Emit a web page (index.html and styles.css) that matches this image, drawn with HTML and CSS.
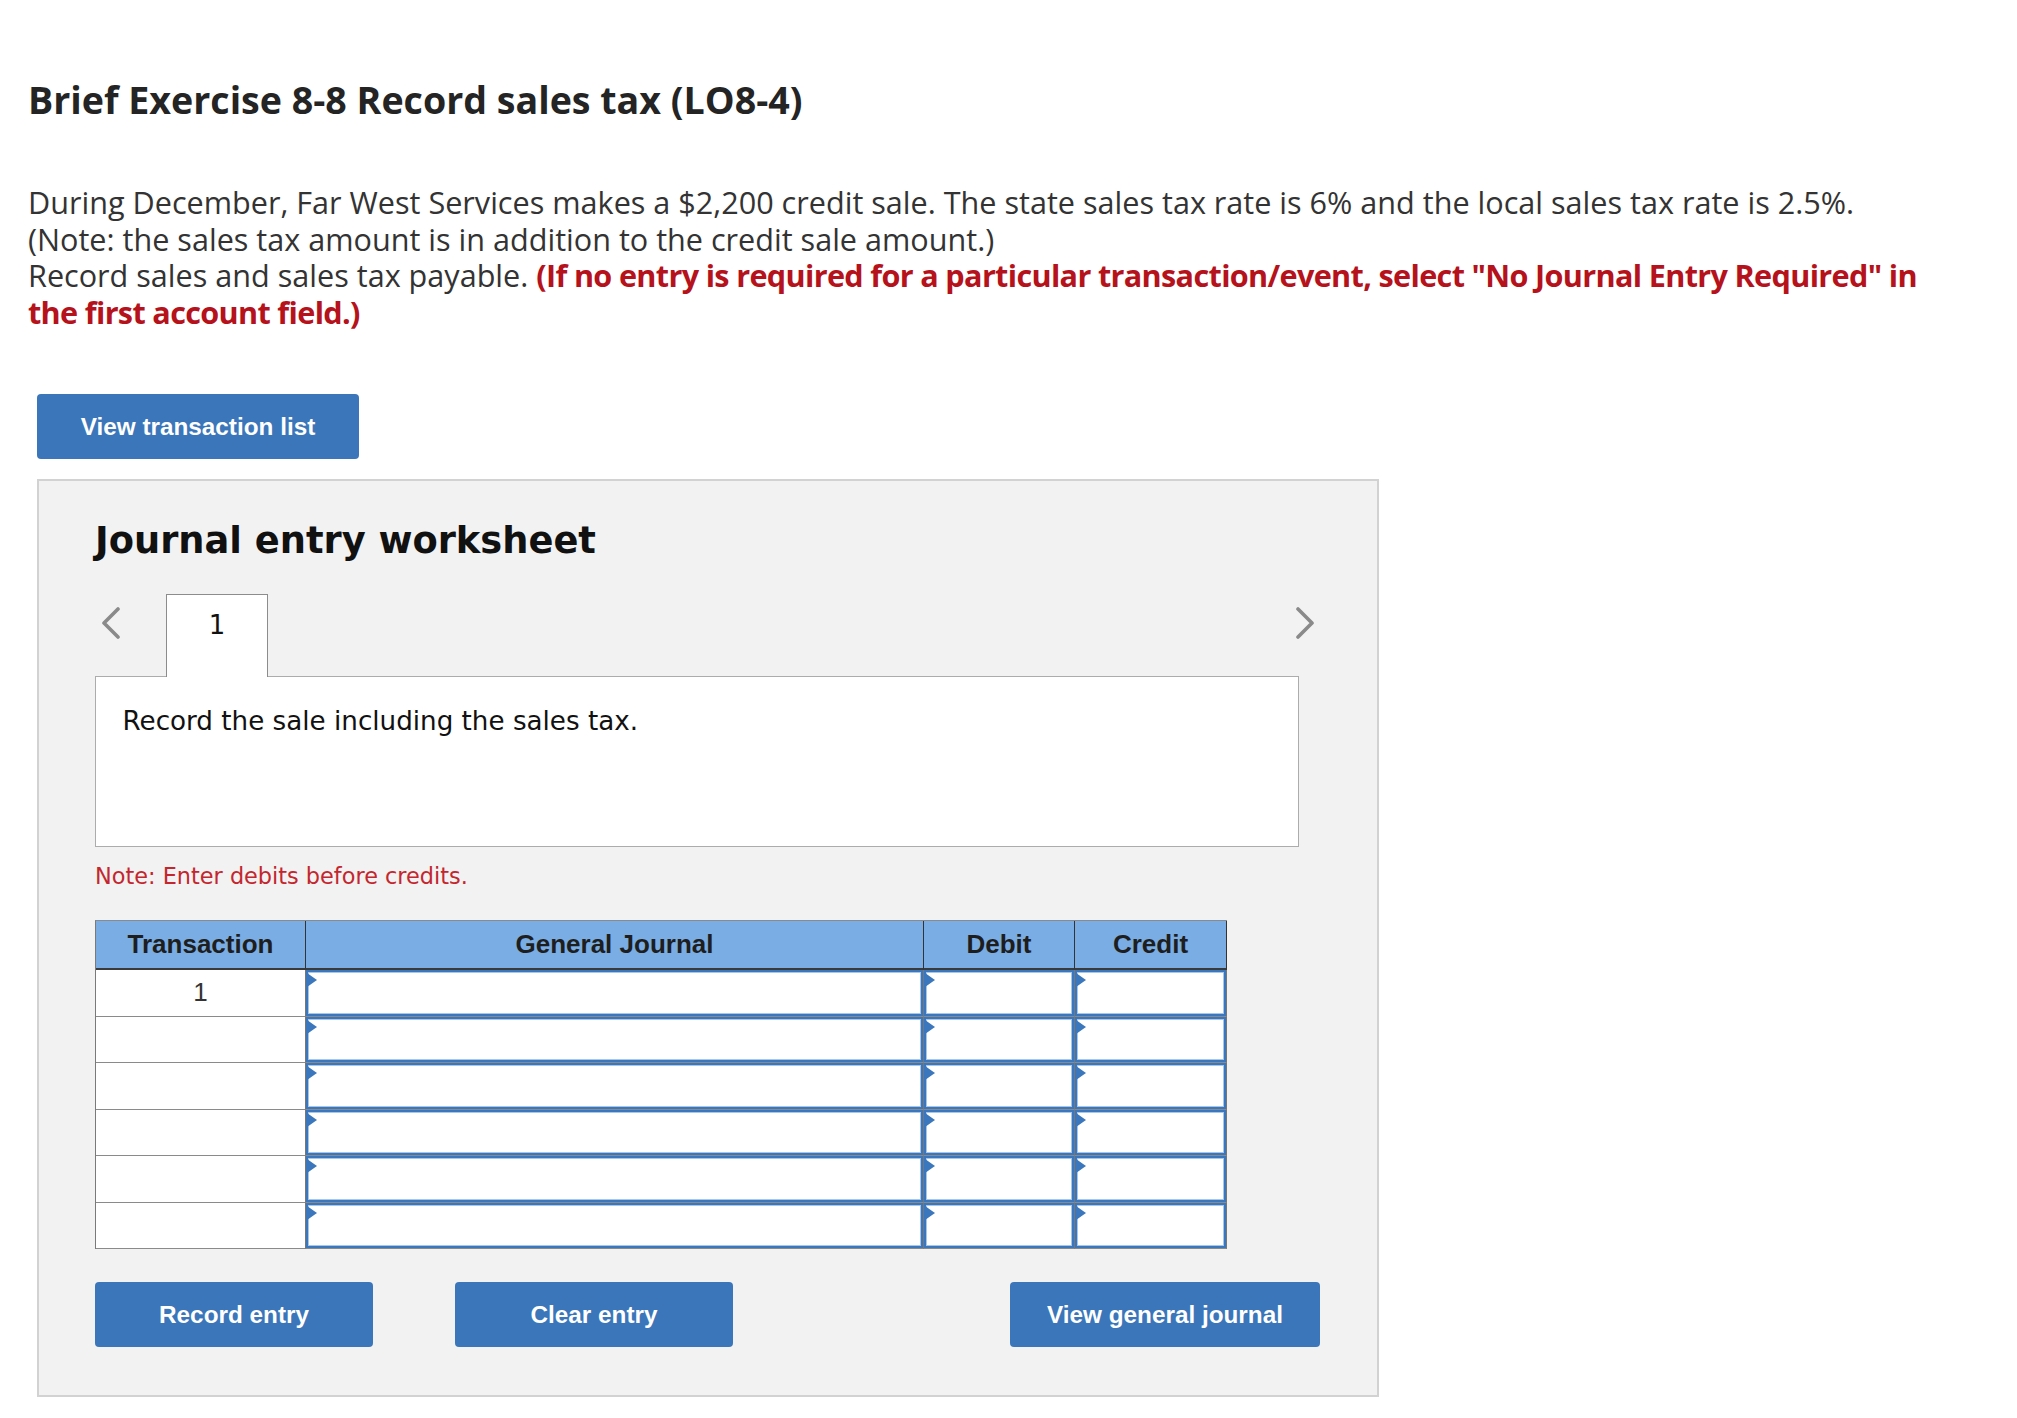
FILE: index.html
```html
<!DOCTYPE html>
<html lang="en">
<head>
<meta charset="utf-8">
<title>Brief Exercise 8-8 Record sales tax (LO8-4)</title>
<link rel="stylesheet" href="styles.css">
</head>
<body>
<h1 class="title">Brief Exercise 8-8 Record sales tax (LO8-4)</h1>
<p class="prompt">During December, Far West Services makes a $2,200 credit sale. The state sales tax rate is 6% and the local sales tax rate is 2.5%.<br>(Note: the sales tax amount is in addition to the credit sale amount.)<br>Record sales and sales tax payable. <strong class="req">(If no entry is required for a particular transaction/event, select "No Journal Entry Required" in<br>the first account field.)</strong></p>

<button class="btn btn-list" type="button">View transaction list</button>

<section class="panel">
  <h2 class="panel-title">Journal entry worksheet</h2>
  <div class="tabs">
    <span class="chev chev-left"><svg width="20" height="32" viewBox="0 0 20 32"><path d="M17 2 L3 16 L17 30" fill="none" stroke="#8a8a8a" stroke-width="3.6" stroke-linecap="round" stroke-linejoin="round"/></svg></span>
    <div class="tab">1</div>
    <span class="chev chev-right"><svg width="20" height="32" viewBox="0 0 20 32"><path d="M3 2 L17 16 L3 30" fill="none" stroke="#8a8a8a" stroke-width="3.6" stroke-linecap="round" stroke-linejoin="round"/></svg></span>
  </div>
  <div class="desc">Record the sale including the sales tax.</div>
  <p class="note">Note: Enter debits before credits.</p>

  <table class="journal">
    <colgroup>
      <col class="c-tr"><col class="c-gj"><col class="c-dr"><col class="c-cr">
    </colgroup>
    <thead>
      <tr><th><div class="hcell">Transaction</div></th><th><div class="hcell">General Journal</div></th><th><div class="hcell">Debit</div></th><th><div class="hcell">Credit</div></th></tr>
    </thead>
    <tbody>
      <tr><td><div class="tcell">1</div></td><td><div class="inp"></div></td><td><div class="inp"></div></td><td><div class="inp"></div></td></tr>
      <tr><td><div class="tcell"></div></td><td><div class="inp"></div></td><td><div class="inp"></div></td><td><div class="inp"></div></td></tr>
      <tr><td><div class="tcell"></div></td><td><div class="inp"></div></td><td><div class="inp"></div></td><td><div class="inp"></div></td></tr>
      <tr><td><div class="tcell"></div></td><td><div class="inp"></div></td><td><div class="inp"></div></td><td><div class="inp"></div></td></tr>
      <tr><td><div class="tcell"></div></td><td><div class="inp"></div></td><td><div class="inp"></div></td><td><div class="inp"></div></td></tr>
      <tr><td><div class="tcell"></div></td><td><div class="inp"></div></td><td><div class="inp"></div></td><td><div class="inp"></div></td></tr>
    </tbody>
  </table>

  <div class="actions">
    <button class="btn btn-record" type="button">Record entry</button>
    <button class="btn btn-clear" type="button">Clear entry</button>
    <button class="btn btn-view" type="button">View general journal</button>
  </div>
</section>
</body>
</html>
```
FILE: styles.css
```css
html, body { background: #ffffff; }
body {
  margin: 0;
  padding: 78px 0 0 28px;
  font-family: "Open Sans", "Liberation Sans", sans-serif;
  color: #333333;
}

.title {
  margin: 0;
  font-family: "Open Sans", sans-serif;
  font-weight: 700;
  font-size: 37.6px;
  line-height: 44px;
  color: #242424;
}

.prompt {
  margin: 62px 0 0 0;
  font-size: 30.6px;
  line-height: 36.5px;
  color: #333333;
  white-space: nowrap;
}
.req {
  color: #b5121b;
  font-weight: 700;
  letter-spacing: -0.66px;
}

.btn {
  display: flex;
  align-items: center;
  justify-content: center;
  height: 65px;
  padding: 0;
  border: none;
  border-radius: 4px;
  background: #3a76b9;
  color: #ffffff;
  font-family: "Liberation Sans", Arial, sans-serif;
  font-weight: 700;
  font-size: 24.3px;
  cursor: pointer;
}
.btn-list {
  width: 322px;
  margin: 64px 0 0 9px;
}

.panel {
  box-sizing: border-box;
  width: 1342px;
  margin: 20px 0 0 9px;
  padding: 38px 57px 48px 56px;
  background: #f2f2f2;
  border: 2px solid #d2d2d2;
}
.panel-title {
  margin: 0;
  font-family: "DejaVu Sans", Verdana, sans-serif;
  font-weight: 700;
  font-size: 36.8px;
  line-height: 44px;
  color: #111111;
}

.tabs {
  display: flex;
  align-items: flex-start;
  margin-top: 31px;
  width: 1220px;
}
.chev {
  display: block;
  margin-top: 13px;
  line-height: 0;
}
.chev-left { margin-left: 6px; }
.chev-right { margin-left: auto; }
.tab {
  position: relative;
  z-index: 1;
  box-sizing: border-box;
  width: 102px;
  height: 83px;
  margin: 0 0 -1px 45px;
  padding-top: 14px;
  background: #ffffff;
  border: 1px solid #8c8c8c;
  border-bottom: none;
  text-align: center;
  font-family: "DejaVu Sans", Verdana, sans-serif;
  font-size: 26px;
  line-height: 32px;
  color: #111111;
}

.desc {
  box-sizing: border-box;
  width: 1204px;
  height: 171px;
  padding: 28px 24px 29px 26.5px;
  background: #ffffff;
  border: 1px solid #acacac;
  font-family: "DejaVu Sans", Verdana, sans-serif;
  font-size: 26.2px;
  line-height: 32px;
  color: #111111;
}

.note {
  margin: 15px 0 0 0;
  font-family: "DejaVu Sans", Verdana, sans-serif;
  font-size: 22.4px;
  line-height: 28px;
  color: #c4262e;
}

.journal {
  margin-top: 30px;
  table-layout: fixed;
  width: 1132px;
  border-collapse: separate;
  border-spacing: 0;
  border-left: 1px solid #7a7a7a;
  border-top: 1px solid #8a8a8a;
}
.c-tr { width: 210px; }
.c-gj { width: 618px; }
.c-dr { width: 151px; }
.c-cr { width: 152px; }

.journal th {
  padding: 0;
  background: #79ade3;
  border-right: 1px solid #333333;
  border-bottom: 2px solid #3a3a3a;
}
.hcell {
  height: 47px;
  display: flex;
  align-items: center;
  justify-content: center;
  font-family: "Liberation Sans", Arial, sans-serif;
  font-weight: 700;
  font-size: 26px;
  color: #1e1e1e;
}
.journal td {
  padding: 0;
  background: #ffffff;
  border-right: 1px solid #777777;
  border-bottom: 1px solid #8a8a8a;
}
.tcell {
  height: 45.5px;
  display: flex;
  align-items: center;
  justify-content: center;
  font-family: "Liberation Sans", Arial, sans-serif;
  font-size: 26px;
  color: #333333;
}
.inp {
  position: relative;
  box-sizing: border-box;
  height: 45.5px;
  border: 2px solid #3b77bc;
  box-shadow: inset 0 0 0 1px #a8c6e9;
  background: #ffffff;
}
.inp::before {
  content: "";
  position: absolute;
  left: -1px;
  top: 1px;
  width: 0;
  height: 0;
  border-left: 10px solid #3b77bc;
  border-top: 7px solid transparent;
  border-bottom: 7px solid transparent;
}

.actions {
  display: flex;
  margin-top: 33px;
}
.btn-record { width: 278px; }
.btn-clear { width: 278px; margin-left: 82px; }
.btn-view { width: 310px; margin-left: auto; }
```
